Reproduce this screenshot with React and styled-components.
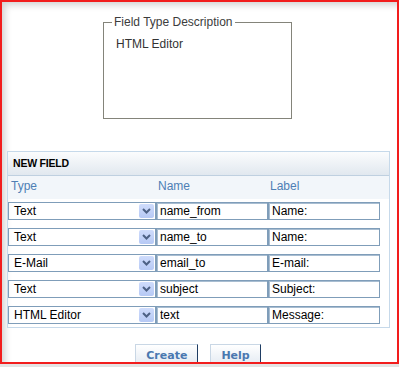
import React from "react";
import styled, { createGlobalStyle } from "styled-components";

const rows = [
  { type: "Text", name: "name_from", label: "Name:" },
  { type: "Text", name: "name_to", label: "Name:" },
  { type: "E-Mail", name: "email_to", label: "E-mail:" },
  { type: "Text", name: "subject", label: "Subject:" },
  { type: "HTML Editor", name: "text", label: "Message:" },
];

export default function App() {
  return (
    <>
      <Global />
      <Frame>
        <Legendary>
          <legend>Field Type Description</legend>
          <Description>HTML Editor</Description>
        </Legendary>

        <Panel>
          <PanelHeader>NEW FIELD</PanelHeader>
          <ColumnRow>
            <ColLabel $w={147}>Type</ColLabel>
            <ColLabel $w={112}>Name</ColLabel>
            <ColLabel $w={112}>Label</ColLabel>
          </ColumnRow>
          <Rows>
            {rows.map((r, i) => (
              <FieldRow key={i}>
                <SelectBox>
                  <span>{r.type}</span>
                  <DropButton>
                    <svg width="9" height="6" viewBox="0 0 9 6">
                      <path d="M1 1 L4.5 4.5 L8 1" fill="none" stroke="#4d6185" strokeWidth="2" />
                    </svg>
                  </DropButton>
                </SelectBox>
                <TextInput defaultValue={r.name} />
                <TextInput defaultValue={r.label} />
              </FieldRow>
            ))}
          </Rows>
        </Panel>

        <Buttons>
          <Button>Create</Button>
          <Button>Help</Button>
        </Buttons>
      </Frame>
    </>
  );
}

const Global = createGlobalStyle`
  body {
    margin: 0;
    background: #e4e4e4;
    font-family: "Liberation Sans", Arial, sans-serif;
  }
`;

const Frame = styled.div`
  box-sizing: border-box;
  width: 399px;
  height: 364px;
  border: 2px solid #f21d1d;
  background: #fff;
  box-shadow: inset 6px 6px 7px -3px rgba(0, 0, 0, 0.18);
  overflow: hidden;
`;

const Legendary = styled.fieldset`
  box-sizing: border-box;
  width: 189px;
  height: 104px;
  margin: 13px 0 0 101px;
  padding: 0 12px;
  border: 1px solid #84847a;
  legend {
    padding: 0 2px;
    margin-left: -4px;
    font-size: 12px;
    line-height: 14px;
    color: #3c3c3c;
  }
`;

const Description = styled.div`
  margin-top: 8px;
  font-size: 12px;
  color: #333;
`;

const Panel = styled.div`
  box-sizing: border-box;
  width: 383px;
  margin: 32px 0 0 5px;
  border: 1px solid #c6d9ea;
  padding-bottom: 3px;
`;

const PanelHeader = styled.div`
  height: 23px;
  line-height: 23px;
  padding-left: 5px;
  background: linear-gradient(#fbfcfd, #e1e8ef);
  border-bottom: 1px solid #bfd0e0;
  font-size: 10.5px;
  font-weight: bold;
  letter-spacing: -0.2px;
  color: #000;
`;

const ColumnRow = styled.div`
  display: flex;
  height: 23px;
  background: #f2f6fa;
  padding-left: 3px;
`;

const ColLabel = styled.div`
  width: ${(p) => p.$w}px;
  font-size: 12px;
  line-height: 20px;
  color: #4e7fb5;
`;

const Rows = styled.div`
  display: flex;
  flex-direction: column;
  gap: 8px;
  padding: 3px 0 0 0;
`;

const FieldRow = styled.div`
  display: flex;
  height: 18px;
`;

const SelectBox = styled.div`
  box-sizing: border-box;
  width: 148px;
  height: 18px;
  border: 1px solid #7f9db9;
  display: flex;
  align-items: center;
  justify-content: space-between;
  padding: 0 1px 0 5px;
  font-size: 12px;
  color: #000;
`;

const DropButton = styled.div`
  width: 15px;
  height: 14px;
  border-radius: 2px;
  background: linear-gradient(#cfdcfc, #b6c9f5);
  display: flex;
  align-items: center;
  justify-content: center;
`;

const TextInput = styled.input`
  box-sizing: border-box;
  width: 112px;
  height: 18px;
  margin: 0;
  border: 1px solid #7f9db9;
  box-shadow: inset 1px 1px 0 #a8bdd1;
  padding: 0 3px;
  font-family: "Liberation Sans", Arial, sans-serif;
  font-size: 12px;
  color: #000;
  outline: none;
`;

const Buttons = styled.div`
  display: flex;
  justify-content: center;
  gap: 12px;
  margin: 16px 0 0 -3px;
`;

const Button = styled.button`
  box-sizing: border-box;
  height: 22px;
  padding: 0 10px;
  border: 1px solid #c9d7e5;
  border-right-color: #1f3d63;
  background: linear-gradient(#ffffff, #e3eaf2);
  font-family: "DejaVu Sans", Verdana, sans-serif;
  font-size: 11px;
  font-weight: bold;
  color: #4a78b0;
`;
